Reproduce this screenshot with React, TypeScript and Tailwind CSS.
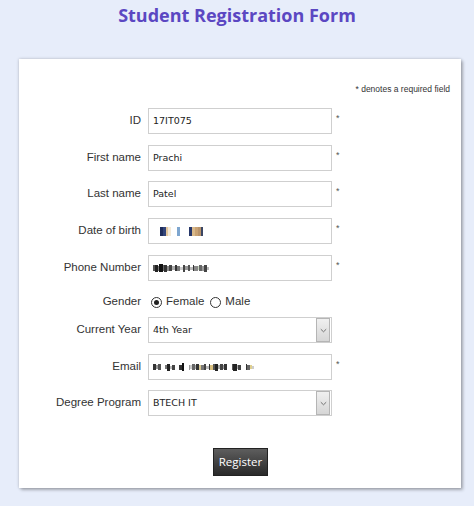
import React from "react";

type Seg = [number, string, number?];

function Redact({ segs, h = 8, k = 1 }: { segs: Seg[]; h?: number; k?: number }) {
  return (
    <span className="flex items-center">
      {segs.map((s, i) => (
        <span
          key={i}
          style={{ width: s[0] * k, height: s[2] ?? h, background: s[1] }}
          className="inline-block"
        />
      ))}
    </span>
  );
}

const dob: Seg[] = [
  [2, "#1e2d5c"], [2, "#33457a"], [2, "#e3c79e"], [2, "#f4ead8"], [4, "#ffffff"],
  [2, "#7ea6cf"], [7, "#ffffff"], [2, "#27376a"], [2, "#d9b98a"], [2, "#c9a273"],
  [2, "#b8936a"], [2, "#3b4663"],
];
const phone: Seg[] = [
  [1, "#555", 6], [2, "#222", 7], [1, "#777", 5], [2, "#111", 8], [1, "#666", 6], [2, "#333", 7],
  [1, "#888", 5], [2, "#444", 6], [2, "#aaa", 4], [1, "#333", 6], [2, "#777", 5], [2, "#ccc", 3],
  [1, "#444", 7], [2, "#999", 4], [1, "#555", 6], [2, "#bbb", 3], [1, "#333", 6], [2, "#888", 5],
  [1, "#c8d8c0", 4], [2, "#666", 6], [1, "#999", 5], [2, "#444", 7], [1, "#bbb", 3],
];
const email: Seg[] = [
  [2, "#333", 6], [1, "#999", 4], [2, "#555", 6], [3, "#fff", 2], [1, "#777", 4], [2, "#222", 7],
  [1, "#bbb", 3], [2, "#444", 5], [3, "#fff", 2], [2, "#333", 5], [1, "#111", 8], [3, "#fff", 2],
  [1, "#999", 5], [1, "#ccc", 4], [2, "#666", 6], [1, "#aaa", 4], [2, "#333", 6], [1, "#d8c890", 5],
  [2, "#777", 5], [1, "#444", 6], [2, "#bbb", 3], [1, "#333", 6], [2, "#d9c080", 5], [1, "#555", 6],
  [2, "#222", 7], [1, "#aaa", 4], [2, "#444", 6], [1, "#999", 4], [2, "#333", 6], [3, "#fff", 2],
  [1, "#555", 6], [2, "#222", 7], [1, "#aaa", 4], [2, "#444", 5], [3, "#fff", 2], [1, "#333", 6],
  [2, "#666", 5], [1, "#e0d090", 4], [1, "#ccc", 3],
];

function Label({ children }: { children: React.ReactNode }) {
  return (
    <div className="w-[122px] shrink-0 text-right text-[11.5px] text-[#333] font-['Liberation_Sans',Arial,sans-serif]">
      {children}
    </div>
  );
}

function Star() {
  return (
    <span className="ml-[4px] -mt-[5px] text-[9px] text-[#555] font-['Liberation_Sans',Arial,sans-serif]">*</span>
  );
}

function Box({ children, select }: { children: React.ReactNode; select?: boolean }) {
  return (
    <div className="ml-[7px] flex h-[26px] w-[184px] items-center border border-[#cfcfcf] bg-white pl-[4px] text-[9.5px] text-[#222] font-['DejaVu_Sans',Verdana,sans-serif]">
      <div className="flex-1">{children}</div>
      {select && (
        <div className="mr-[1px] flex h-[24px] w-[14px] items-center justify-center border border-[#b5b5b5] bg-gradient-to-b from-[#f0f0f0] to-[#d6d6d6]">
          <svg width="7" height="5" viewBox="0 0 7 5">
            <path d="M0.8 1.2 L3.5 3.8 L6.2 1.2" stroke="#666" strokeWidth="0.9" fill="none" />
          </svg>
        </div>
      )}
    </div>
  );
}

function Radio({ checked }: { checked?: boolean }) {
  return (
    <span className="flex h-[11px] w-[11px] items-center justify-center rounded-full border border-[#333] bg-white">
      {checked && <span className="h-[5px] w-[5px] rounded-full bg-[#222]" />}
    </span>
  );
}

export default function App() {
  return (
    <div className="h-[506px] w-[474px] bg-[#e7edfa] pt-[3px]">
      <h1 className="text-center text-[18px] leading-[24px] font-bold text-[#5b47c2] font-['Open_Sans',sans-serif]">
        Student Registration Form
      </h1>
      <div className="ml-[19px] mt-[32px] h-[429px] w-[442px] bg-white pt-[23px] shadow-[0_0_3px_rgba(0,0,0,0.22),2px_2px_3px_rgba(0,0,0,0.25)]">
        <div className="pr-[11px] text-right text-[8.5px] leading-[14px] text-[#333] font-['Liberation_Sans',Arial,sans-serif]">
          * denotes a required field
        </div>
        <div className="mt-[12px] flex flex-col">
          <div className="flex items-center">
            <Label>ID</Label>
            <Box>17IT075</Box>
            <Star />
          </div>
          <div className="mt-[11px] flex items-center">
            <Label>First name</Label>
            <Box>Prachi</Box>
            <Star />
          </div>
          <div className="mt-[10px] flex items-center">
            <Label>Last name</Label>
            <Box>Patel</Box>
            <Star />
          </div>
          <div className="mt-[11px] flex items-center">
            <Label>Date of birth</Label>
            <Box>
              <div className="pl-[7px]">
                <Redact segs={dob} h={9} k={1.4} />
              </div>
            </Box>
            <Star />
          </div>
          <div className="mt-[11px] flex items-center">
            <Label>Phone Number</Label>
            <Box>
              <Redact segs={phone} k={1.6} />
            </Box>
            <Star />
          </div>
          <div className="mt-[12px] flex h-[18px] items-center">
            <Label>Gender</Label>
            <div className="ml-[10px] flex items-center gap-[4px] text-[11.5px] text-[#333] font-['Liberation_Sans',Arial,sans-serif]">
              <Radio checked />
              <span>Female</span>
              <span className="ml-[2px]"><Radio /></span>
              <span>Male</span>
            </div>
          </div>
          <div className="mt-[6px] flex items-center">
            <Label>Current Year</Label>
            <Box select>4th Year</Box>
          </div>
          <div className="mt-[11px] flex items-center">
            <Label>Email</Label>
            <Box>
              <Redact segs={email} k={1.55} />
            </Box>
            <Star />
          </div>
          <div className="mt-[10px] flex items-center">
            <Label>Degree Program</Label>
            <Box select>BTECH IT</Box>
          </div>
        </div>
        <div className="mt-[32px] pl-[194px]">
          <button className="h-[28px] w-[55px] border border-[#222] bg-gradient-to-b from-[#5e5e5e] to-[#2a2a2a] text-[11.5px] text-white font-['Open_Sans',sans-serif]">
            Register
          </button>
        </div>
      </div>
    </div>
  );
}
